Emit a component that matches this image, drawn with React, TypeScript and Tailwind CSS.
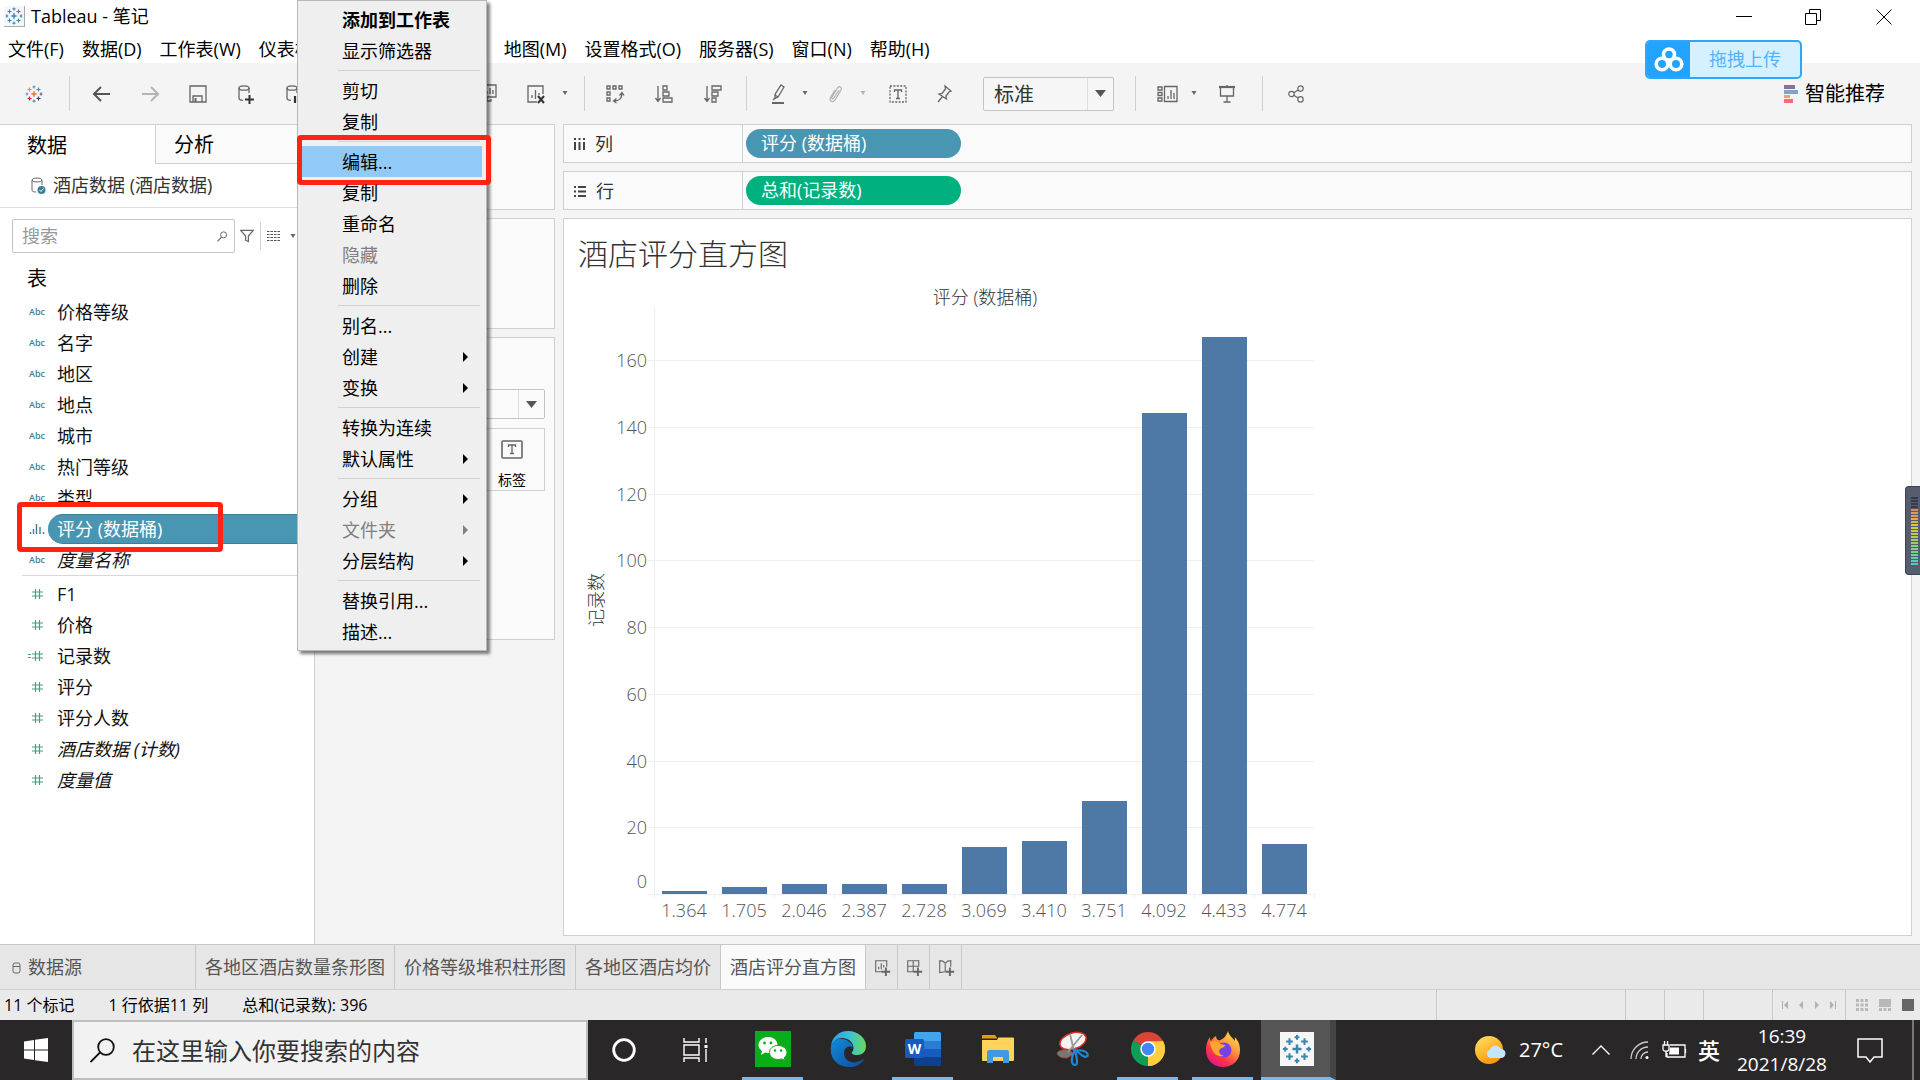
import type { ReactNode } from "react";

interface Field {
  name: string;
  icon: "abc" | "bin" | "number" | "calc";
  italic?: boolean;
  selected?: boolean;
}

interface MenuEntry {
  label: string;
  bold?: boolean;
  disabled?: boolean;
  submenu?: boolean;
  active?: boolean;
}

const MENUS = [
  "文件(F)", "数据(D)", "工作表(W)", "仪表板(B)", "故事(T)", "分析(A)",
  "地图(M)", "设置格式(O)", "服务器(S)", "窗口(N)", "帮助(H)",
];

const DIMENSIONS: Field[] = [
  { name: "价格等级", icon: "abc" },
  { name: "名字", icon: "abc" },
  { name: "地区", icon: "abc" },
  { name: "地点", icon: "abc" },
  { name: "城市", icon: "abc" },
  { name: "热门等级", icon: "abc" },
  { name: "类型", icon: "abc" },
  { name: "评分 (数据桶)", icon: "bin", selected: true },
  { name: "度量名称", icon: "abc", italic: true },
];

const MEASURES: Field[] = [
  { name: "F1", icon: "number" },
  { name: "价格", icon: "number" },
  { name: "记录数", icon: "calc" },
  { name: "评分", icon: "number" },
  { name: "评分人数", icon: "number" },
  { name: "酒店数据 (计数)", icon: "number", italic: true },
  { name: "度量值", icon: "number", italic: true },
];

const CONTEXT_MENU: MenuEntry[][] = [
  [{ label: "添加到工作表", bold: true }, { label: "显示筛选器" }],
  [{ label: "剪切" }, { label: "复制" }],
  [
    { label: "编辑...", active: true },
    { label: "复制" },
    { label: "重命名" },
    { label: "隐藏", disabled: true },
    { label: "删除" },
  ],
  [{ label: "别名..." }, { label: "创建", submenu: true }, { label: "变换", submenu: true }],
  [{ label: "转换为连续" }, { label: "默认属性", submenu: true }],
  [
    { label: "分组", submenu: true },
    { label: "文件夹", submenu: true, disabled: true },
    { label: "分层结构", submenu: true },
  ],
  [{ label: "替换引用..." }, { label: "描述..." }],
];

const BINS = [
  { bin: "1.364", count: 1 },
  { bin: "1.705", count: 2 },
  { bin: "2.046", count: 3 },
  { bin: "2.387", count: 3 },
  { bin: "2.728", count: 3 },
  { bin: "3.069", count: 14 },
  { bin: "3.410", count: 16 },
  { bin: "3.751", count: 28 },
  { bin: "4.092", count: 144 },
  { bin: "4.433", count: 167 },
  { bin: "4.774", count: 15 },
];

const SHEETS = ["各地区酒店数量条形图", "价格等级堆积柱形图", "各地区酒店均价", "酒店评分直方图"];

/* ---------- icons ---------- */

function Glyph({ size = 20, className = "text-[#666]", children }: { size?: number; className?: string; children: ReactNode }) {
  return (
    <svg width={size} height={size} viewBox="0 0 20 20" fill="none" stroke="currentColor" strokeWidth="1.3" className={`shrink-0 ${className}`} aria-hidden="true">
      {children}
    </svg>
  );
}

function Caret({ className = "text-[#666]" }: { className?: string }) {
  return (
    <svg width="8" height="5" viewBox="0 0 8 5" className={`shrink-0 ${className}`} aria-hidden="true">
      <path d="M1.500 0h5L4 4z" fill="currentColor" />
    </svg>
  );
}

function BigCaret() {
  return (
    <svg width="11" height="7" viewBox="0 0 11 7" className="text-[#555]" aria-hidden="true">
      <path d="M0 0h11L5.500 7z" fill="currentColor" />
    </svg>
  );
}

const LOGO_COLORS = ["#e8762d", "#7199a6", "#7199a6", "#5b6591", "#5b879b", "#eb912c", "#c72035", "#59879b", "#1f447e"];

function TableauMark({ size, mono }: { size: number; mono?: string }) {
  const marks: [number, number, number][] = [
    [12, 12, 3.6], [12, 2.6, 1.9], [2.6, 12, 1.9], [21.4, 12, 1.9], [12, 21.4, 1.9],
    [6, 6, 2.7], [6, 18, 2.7], [18, 6, 2.7], [18, 18, 2.7],
  ];
  return (
    <svg width={size} height={size} viewBox="0 0 24 24" fill="none" aria-hidden="true">
      {marks.map(([x, y, r], i) => (
        <path key={i} d={`M${x - r} ${y}h${r * 2}M${x} ${y - r}v${r * 2}`} stroke={mono ?? LOGO_COLORS[i]} strokeWidth={i === 0 ? 2 : 1.6} />
      ))}
    </svg>
  );
}

function Database({ paused }: { paused?: boolean }) {
  return (
    <Glyph>
      <ellipse cx="8" cy="4" rx="5" ry="2.200" />
      <path d="M3 4v10c0 1.500 2 2.300 4 2.300M13 4v5" />
      {paused ? <path d="M11 12v7M15 12v7" strokeWidth="2.200" stroke="#333" /> : <path d="M9 15.500h9M13.500 11v9" strokeWidth="2" stroke="#333" />}
    </Glyph>
  );
}

function FieldIcon({ icon }: { icon: Field["icon"] }) {
  if (icon === "abc") {
    return <span className="text-[9px] font-semibold text-[#3b7f99]">Abc</span>;
  }
  if (icon === "bin") {
    return (
      <svg width="16" height="12" viewBox="0 0 16 12" stroke="#3b7f99" strokeWidth="1.400" aria-hidden="true">
        <path d="M1.500 9v2M4.500 6v5M7.500 1v10M11 4v7M14.500 9v2" />
      </svg>
    );
  }
  return (
    <svg width="18" height="12" viewBox="0 0 18 12" stroke="#3fa37c" strokeWidth="1.200" aria-hidden="true">
      <path d="M7.500 1v10M11.500 1v10M4 4h11M4 8h11" />
      {icon === "calc" && <path d="M0 4.500h3M0 7.500h3" />}
    </svg>
  );
}

/* ---------- top of the window ---------- */

function TitleBar() {
  return (
    <header className="flex h-[31px] items-center bg-white pt-[2px] pl-1">
      <span className="flex h-[21px] w-[21px] items-center justify-center border-r border-b border-[#aaa] bg-[#f6f6f6]">
        <TableauMark size={18} mono="#3a86ad" />
      </span>
      <h1 className="ml-[6px] flex-1 text-[18px] leading-[29px] text-black">Tableau - 笔记</h1>
      <button aria-label="最小化" className="flex w-[69px] justify-center">
        <svg width="16" height="16" viewBox="0 0 16 16" stroke="#000"><path d="M0 7.500h16" /></svg>
      </button>
      <button aria-label="还原" className="flex w-[69px] justify-center">
        <svg width="16" height="16" viewBox="0 0 16 16" stroke="#000" fill="none"><path d="M.5 4.500h11v11H.5zM4.500 4.500V.5h11v11h-4" /></svg>
      </button>
      <button aria-label="关闭" className="flex w-[73px] justify-center">
        <svg width="16" height="16" viewBox="0 0 16 16" stroke="#000"><path d="M.5.5l15 15M15.500.5l-15 15" /></svg>
      </button>
    </header>
  );
}

function MenuBar() {
  return (
    <nav className="flex h-8 items-end gap-[18px] bg-white pl-2">
      {MENUS.map((menu) => (
        <button key={menu} className="text-[18px] leading-7 whitespace-nowrap text-black">{menu}</button>
      ))}
    </nav>
  );
}

function ToolButton({ label, className = "w-[46px]", children }: { label: string; className?: string; children: ReactNode }) {
  return (
    <button aria-label={label} className={`flex h-9 shrink-0 items-center justify-center ${className}`}>
      {children}
    </button>
  );
}

function Divider({ className }: { className: string }) {
  return <span className={`h-[35px] w-px shrink-0 bg-[#d0d0d0] ${className}`} />;
}

function Toolbar() {
  return (
    <div className="flex h-[61px] items-center bg-[#f4f4f4] pl-[10px]">
      <ToolButton label="开始页面" className="w-12"><TableauMark size={18} /></ToolButton>
      <Divider className="mr-2 ml-[11px]" />
      <ToolButton label="撤销" className="w-12">
        <Glyph className="text-[#555]"><path d="M2 10h16M9 3l-7 7 7 7" strokeWidth="2" /></Glyph>
      </ToolButton>
      <ToolButton label="重做" className="w-12">
        <Glyph className="text-[#b4b4b4]"><path d="M2 10h16M11 3l7 7-7 7" strokeWidth="2" /></Glyph>
      </ToolButton>
      <ToolButton label="保存" className="w-12">
        <Glyph><path d="M2 2h16v16H2zM5 18v-6h9v6" /><path d="M7.500 14v4" strokeWidth="2" /></Glyph>
      </ToolButton>
      <ToolButton label="新建数据源" className="w-12"><Database /></ToolButton>
      <ToolButton label="暂停自动更新" className="w-12"><Database paused /></ToolButton>
      <ToolButton label="运行更新" className="w-12">
        <Glyph><path d="M16 6a7 7 0 1 0 1 5M16 2v4h-4" /></Glyph>
      </ToolButton>
      <Divider className="mx-3" />
      <ToolButton label="新建工作表" className="w-[73px]">
        <Glyph><path d="M2 2h13v13H2zM5 12V8M8.500 12V5M12 12V9" /></Glyph>
      </ToolButton>
      <ToolButton label="复制工作表" className="w-12">
        <Glyph><path d="M6 1h12v12H6zM9 10V7M12 10V4M15 10V6M3 6v11h10v-2M6 14v2M9 14v2" /></Glyph>
      </ToolButton>
      <ToolButton label="清除工作表" className="w-12">
        <Glyph><path d="M11 18H2V2h15v8M6 14v-3M9.500 15V6M13 11V9" /><path d="M12 12l6 7M18 12l-6 7" strokeWidth="2" stroke="#333" /></Glyph>
      </ToolButton>
      <Caret className="ml-px text-[#666]" />
      <Divider className="mr-[6px] ml-[15px]" />
      <ToolButton label="交换行和列" className="w-12">
        <Glyph><path d="M2 2h3v3H2zM8 2h3v3H8zM14 2h3v3h-3zM2 8h3v3H2zM2 14h3v3H2zM17 9c0 5-3 8-8 8M14.500 11.500L17 8.500l2 3M11.500 14.500L8.500 17l3 2" /></Glyph>
      </ToolButton>
      <ToolButton label="升序排序" className="w-[50px]">
        <Glyph><path d="M4 2v15M1.500 14L4 17.500 6.500 14M9 2h4v4H9zM9 8h6v4H9zM9 14h9v4H9z" /></Glyph>
      </ToolButton>
      <ToolButton label="降序排序" className="w-12">
        <Glyph><path d="M4 2v15M1.500 14L4 17.500 6.500 14M9 2h9v4H9zM9 8h6v4H9zM9 14h4v4H9z" /></Glyph>
      </ToolButton>
      <Divider className="mr-2 ml-[9px]" />
      <ToolButton label="突出显示">
        <Glyph><path d="M13 1l3 2-6 10-3 1.500v-4zM7 11l3 2M5 16l2-2" /><path d="M4 19h12" strokeWidth="2" /></Glyph>
      </ToolButton>
      <Caret />
      <ToolButton label="组成员" className="ml-1 w-[46px]">
        <Glyph className="text-[#b4b4b4]"><path d="M13 6l-5 8c-1 1.500-3 .5-2-1l5.500-9c1.500-2.500 5-.5 3.500 2l-6 10c-2 3-6.500 1-4.500-2.500L9 6" /></Glyph>
      </ToolButton>
      <Caret className="text-[#b4b4b4]" />
      <ToolButton label="显示标记标签" className="ml-2 w-[46px]">
        <Glyph><path d="M2 2h16v16H2z" strokeDasharray="2 1.400" /><path d="M6.500 8V6h7v2M10 6v8.500M8 14.500h4" /></Glyph>
      </ToolButton>
      <ToolButton label="固定轴">
        <Glyph><path d="M11 2l6 5-2 1-3 4 .5 3L5 10l3-.500L11.500 5zM8.500 12.500L4 18" /></Glyph>
      </ToolButton>
      <div className="relative ml-4 shrink-0">
        <select aria-label="适合" className="block h-[34px] w-[131px] appearance-none rounded-[2px] border border-[#c4c4c4] bg-[#f6f6f6] pt-[2px] pl-[10px] text-[20px] text-[#333]">
          <option>标准</option>
        </select>
        <span className="pointer-events-none absolute inset-y-px right-px flex w-[26px] items-center justify-center border-l border-[#ddd]"><BigCaret /></span>
      </div>
      <Divider className="mr-2 ml-[21px]" />
      <ToolButton label="显示/隐藏卡">
        <svg width="21" height="18" viewBox="0 0 21 18" fill="none" stroke="#666" strokeWidth="1.300"><path d="M1 2h4v3H1zM1 7.500h4v3H1zM1 13h4v3H1zM7.500 1.500H20v15H7.500zM11 14v-3M14 14V5M17 14V8" /></svg>
      </ToolButton>
      <Caret />
      <ToolButton label="演示模式" className="ml-[6px] w-[46px]">
        <Glyph><path d="M2 3h16" strokeWidth="2.200" /><path d="M3.500 3v9h13V3M10 1v1M10 12v6M6.500 18h7" /></Glyph>
      </ToolButton>
      <Divider className="mr-[10px] ml-3" />
      <ToolButton label="共享">
        <Glyph size={18}><circle cx="5" cy="10" r="3" /><circle cx="15" cy="4" r="3" /><circle cx="15" cy="16" r="3" /><path d="M7.500 8.500l5-3M7.500 11.500l5 3" /></Glyph>
      </ToolButton>
      <button className="mr-[35px] ml-auto flex items-center gap-[6px] text-[20px] whitespace-nowrap text-black">
        <svg width="15" height="18" viewBox="0 0 15 18" aria-hidden="true">
          <path d="M0 0h11v4H0z" fill="#8a7195" /><path d="M0 5h14v4H0z" fill="#7fa3cf" /><path d="M0 10h6v3H0z" fill="#f3a069" /><path d="M0 14h9v4H0z" fill="#fb6a78" />
        </svg>
        智能推荐
      </button>
    </div>
  );
}

/* ---------- data pane ---------- */

function FieldRow({ field }: { field: Field }) {
  return (
    <li className="relative flex h-[31px] items-center">
      <span className="flex w-12 shrink-0 items-center justify-end pr-[2px]">
        <span className="flex w-[18px] justify-center">
          <FieldIcon icon={field.icon} />
        </span>
      </span>
      <span
        className={`h-[30px] flex-1 pl-[9px] text-[18px] ${field.selected ? "rounded-l-full border-y border-[#3d7f9b] bg-[#4996b2] leading-[28px] text-white" : "leading-[31px] text-[#111]"} ${field.italic ? "italic" : ""}`}
      >
        {field.name}
      </span>
      {field.selected && <span className="absolute -top-[11px] left-[17px] z-10 h-[50px] w-[206px] rounded-[4px] border-[5px] border-[#ff2313]" />}
    </li>
  );
}

function DataPane() {
  return (
    <aside className="w-[315px] shrink-0 border-r border-[#d0d0d0] bg-white">
      <div className="flex h-10 border-t border-[#d0d0d0] text-[20px] text-black">
        <button className="w-[155px] pt-[2px] pl-[27px] text-left">数据</button>
        <button className="flex-1 border-b border-l border-[#d0d0d0] bg-[#fafafa] pt-[2px] pl-[18px] text-left">分析</button>
      </div>
      <div className="flex h-11 items-center gap-[7px] border-b border-[#e0e0e0] pl-[31px] text-[18px] text-[#333]">
        <svg width="15" height="18" viewBox="0 0 15 18" fill="none" aria-hidden="true">
          <ellipse cx="6" cy="3" rx="5" ry="2" stroke="#666" /><path d="M1 3v10c0 1.500 1.500 2 4 2M11 3v5" stroke="#666" />
          <circle cx="10.500" cy="13" r="4" fill="#3b7f99" /><path d="M8.500 13l1.500 1.500 2.500-3" stroke="#fff" />
        </svg>
        酒店数据 (酒店数据)
      </div>
      <div className="mt-[11px] flex h-[34px] items-center pl-3">
        <label className="flex h-full w-[223px] items-center rounded-[2px] border border-[#c4c4c4] pr-[6px] pl-[9px]">
          <input aria-label="搜索" placeholder="搜索" className="min-w-0 flex-1 text-[18px] outline-none placeholder:text-[#999]" />
          <Glyph size={11}><circle cx="12" cy="7" r="5.500" strokeWidth="1.800" /><path d="M8 11l-7 8" strokeWidth="2" /></Glyph>
        </label>
        <button aria-label="筛选器" className="ml-[5px]">
          <Glyph size={14}><path d="M1 2h18l-7 8v8l-4-2v-6z" strokeWidth="1.800" /></Glyph>
        </button>
        <span className="mx-[6px] h-7 w-px bg-[#d0d0d0]" />
        <svg width="13" height="10" viewBox="0 0 13 10" stroke="#555" aria-hidden="true">
          <path d="M0 .5h13M0 3.500h13M0 6.500h13M0 9.500h13" strokeDasharray="2.500 1" />
        </svg>
        <span className="ml-[9px] flex"><Caret /></span>
      </div>
      <h2 className="mt-[6px] h-[37px] pl-[27px] text-[20px] leading-[39px] text-black">表</h2>
      <ul>
        {DIMENSIONS.map((field) => <FieldRow key={field.name} field={field} />)}
      </ul>
      <hr className="mb-[2px] ml-[22px] border-[#d8d8d8]" />
      <ul>
        {MEASURES.map((field) => <FieldRow key={field.name} field={field} />)}
      </ul>
    </aside>
  );
}

function Cards() {
  return (
    <section className="flex w-[248px] shrink-0 flex-col gap-2 px-2 text-[14px]">
      <div className="h-[86px] border border-[#d0d0d0] bg-[#fafafa]" />
      <div className="h-[111px] border border-[#d0d0d0] bg-[#fafafa]" />
      <div className="h-[303px] border border-[#d0d0d0] bg-[#fafafa] px-[9px] pt-[51px]">
        <div className="relative">
          <select aria-label="标记类型" className="block h-[30px] w-full appearance-none rounded-[2px] border border-[#c4c4c4] bg-[#fafafa]" />
          <span className="pointer-events-none absolute inset-y-px right-px flex w-[26px] items-center justify-center border-l border-[#ddd]"><BigCaret /></span>
        </div>
        <div className="mt-[9px] flex justify-end">
          <button className="flex h-[63px] w-[66px] flex-col items-center justify-end border border-[#d0d0d0] bg-[#fafafa] text-black">
            <svg width="22" height="19" viewBox="0 0 22 19" fill="none" stroke="#666" aria-hidden="true">
              <rect x="1" y="1" width="20" height="17" rx="1" strokeWidth="1.600" /><path d="M7.500 7V5h7v2M11 5v8.500M9 13.500h4" strokeWidth="1.300" />
            </svg>
            <span className="mt-[10px] leading-[21px]">标签</span>
          </button>
        </div>
      </div>
    </section>
  );
}

/* ---------- worksheet ---------- */

function Shelf({ label, icon, children }: { label: string; icon: ReactNode; children: ReactNode }) {
  return (
    <div className="flex h-[39px] items-center border border-[#d0d0d0] bg-[#fafafa]">
      <div className="flex h-full w-[179px] items-center gap-[10px] border-r border-[#d0d0d0] pt-px pl-[10px] text-[18px] text-[#333]">
        {icon}
        {label}
      </div>
      {children}
    </div>
  );
}

function Histogram() {
  const baseline = 616;
  const unit = 3.3375;
  const left = 90;
  return (
    <svg width="760" height="650" className="block" role="img" aria-label="酒店评分直方图">
      <text x="421" y="26" textAnchor="middle" fontSize="18" fontWeight="300" fill="#333">评分 (数据桶)</text>
      <text transform="translate(39 322) rotate(-90)" textAnchor="middle" fontSize="18" fontWeight="300" fill="#333">记录数</text>
      {[0, 20, 40, 60, 80, 100, 120, 140, 160].map((tick) => {
        const y = Math.round(baseline - tick * unit);
        return (
          <g key={tick}>
            <path d={`M${left - 6} ${y + 0.5}H750`} stroke="#eee" />
            <text x="83" y={tick === 0 ? 610 : y + 7} textAnchor="end" fontSize="18" fontWeight="300" fill="#555">{tick}</text>
          </g>
        );
      })}
      <path d={`M${left + 0.5} 30V${baseline}`} stroke="#eee" />
      {BINS.map(({ bin, count }, i) => (
        <g key={bin}>
          <path d={`M${left + i * 60 + 0.5} ${baseline}v4`} stroke="#eee" />
          <rect x={left + 8 + i * 60} y={Math.round(baseline - count * unit)} width="45" height={Math.round(count * unit)} fill="#4e79a7" />
          <text x={left + 30 + i * 60} y="639" textAnchor="middle" fontSize="18" fontWeight="300" fill="#555">{bin}</text>
        </g>
      ))}
      <path d={`M750.5 ${baseline}v4`} stroke="#eee" />
    </svg>
  );
}

function Worksheet() {
  return (
    <main className="flex min-w-0 flex-1 flex-col gap-2 pr-2 pb-2">
      <Shelf
        label="列"
        icon={<svg width="11" height="12" viewBox="0 0 11 12" stroke="#444" strokeWidth="2" aria-hidden="true"><path d="M1 0v2M1 4v8M5.500 0v2M5.500 4v8M10 0v2M10 4v8" /></svg>}
      >
        <button className="ml-[3px] h-[29px] w-[215px] rounded-full bg-[#4996b2] pl-[15px] text-left text-[18px] leading-[29px] text-white">评分 (数据桶)</button>
      </Shelf>
      <Shelf
        label="行"
        icon={<svg width="12" height="11" viewBox="0 0 12 11" stroke="#444" strokeWidth="2" aria-hidden="true"><path d="M0 1h2M4 1h8M0 5.500h2M4 5.500h8M0 10h2M4 10h8" /></svg>}
      >
        <button className="ml-[3px] h-[29px] w-[215px] rounded-full bg-[#00b180] pl-[15px] text-left text-[18px] leading-[29px] text-white">总和(记录数)</button>
      </Shelf>
      <div className="flex-1 border border-[#d0d0d0] bg-white pt-[11px]">
        <h2 className="pl-[14px] text-[30px] leading-[48px] font-light text-[#333]">酒店评分直方图</h2>
        <Histogram />
      </div>
    </main>
  );
}

/* ---------- bottom of the window ---------- */

function SheetTabs() {
  return (
    <nav className="flex h-[45px] border-t border-[#c8c8c8] bg-[#e6e6e6] text-[18px] text-[#555]">
      <button className="flex w-[196px] items-center gap-[7px] border-r border-[#c8c8c8] pt-px pl-3">
        <svg width="9" height="12" viewBox="0 0 9 12" fill="none" stroke="#666" aria-hidden="true"><rect x="1" y="1" width="7" height="10" rx="2" /><path d="M1 4.500h7" /></svg>
        数据源
      </button>
      {SHEETS.map((sheet, i) => (
        <button key={sheet} className={`border-r border-[#c8c8c8] px-[9px] pt-px whitespace-nowrap ${i === SHEETS.length - 1 ? "bg-[#fafafa]" : ""}`}>
          {sheet}
        </button>
      ))}
      <button aria-label="新建工作表" className="flex w-8 items-center justify-center border-r border-[#c8c8c8] pl-[2px]">
        <Glyph size={17}><path d="M10 15H2V2h13v7M5.500 12V9M8.500 12V5M11.500 10V7" /><path d="M9 15h10M14 10v10" strokeWidth="2.200" /></Glyph>
      </button>
      <button aria-label="新建仪表板" className="flex w-8 items-center justify-center border-r border-[#c8c8c8] pl-[2px]">
        <Glyph size={17}><path d="M10 15H2V2h13v7M8.500 2v13M2 8.500h13" /><path d="M9 15h10M14 10v10" strokeWidth="2.200" /></Glyph>
      </button>
      <button aria-label="新建故事" className="flex w-8 items-center justify-center border-r border-[#c8c8c8] pl-[2px]">
        <Glyph size={17}><path d="M8.500 15L2 16V2l3.500.500 3 2.500 3-2.500L15 2v7M8.500 5v10" /><path d="M9 15h10M14 10v10" strokeWidth="2.200" /></Glyph>
      </button>
    </nav>
  );
}

function StatusBar() {
  return (
    <div className="flex h-[31px] items-center border-t border-[#d0d0d0] bg-[#eaeaea] pl-1 text-[16px] whitespace-nowrap text-black">
      <span>11 个标记</span>
      <span className="ml-[34px]">1 行依据11 列</span>
      <span className="ml-[34px]">总和(记录数): 396</span>
      <span className="ml-auto h-full w-[189px] border-l border-[#c8c8c8]" />
      <span className="h-full w-[39px] border-l border-[#c8c8c8]" />
      <span className="h-full w-[39px] border-l border-[#c8c8c8]" />
      <span className="h-full w-[69px] border-l border-[#c8c8c8]" />
      <span className="flex h-full w-[73px] items-center justify-between border-l border-[#c8c8c8] px-[9px]">
        {["M6 0v8L2 4zM0 0h1v8H0z", "M5 0v8L1 4z", "M1 0v8l4-4z", "M0 0v8l4-4zM5 0h1v8H5z"].map((d) => (
          <svg key={d} width="6" height="8" viewBox="0 0 6 8" fill="#b0b0b0" aria-hidden="true"><path d={d} /></svg>
        ))}
      </span>
      <span className="flex h-full w-[75px] items-center gap-[11px] border-l border-[#c8c8c8] pl-[10px]">
        <svg width="12" height="12" viewBox="0 0 12 12" stroke="#b8b8b8" strokeWidth="3" aria-hidden="true"><path d="M0 1.500h12M0 6h12M0 10.500h12" strokeDasharray="3 1.500" /></svg>
        <svg width="12" height="12" viewBox="0 0 12 12" stroke="#b8b8b8" aria-hidden="true"><path d="M0 4h12" strokeWidth="8" /><path d="M0 10.500h12" strokeWidth="3" strokeDasharray="3 1.500" /></svg>
        <span className="h-3 w-3 bg-[#666]" />
      </span>
    </div>
  );
}

function TaskbarApp({ label, running, children }: { label: string; running?: boolean; children: ReactNode }) {
  return (
    <button aria-label={label} className="flex h-full w-[75px] shrink-0 flex-col items-center">
      <span className="flex flex-1 items-center">{children}</span>
      <span className={`h-[3px] w-[61px] ${running ? "bg-[#76b9ed]" : ""}`} />
    </button>
  );
}

function Taskbar() {
  return (
    <footer className="flex h-[60px] items-stretch bg-[#2a2728] text-white">
      <button aria-label="开始" className="flex w-[72px] items-center justify-center">
        <svg width="24" height="24" viewBox="0 0 24 24" fill="#fff"><path d="M0 3.400l10-1.400v9.500H0zM11 1.800L24 0v11.500H11zM0 12.500h10V22L0 20.600zM11 12.500h13V24l-13-1.800z" /></svg>
      </button>
      <label className="flex w-[516px] items-center border-2 border-[#bfbfbf] bg-[#f2f2f2] pl-4">
        <svg width="25" height="25" viewBox="0 0 25 25" fill="none" stroke="#111" strokeWidth="1.800" aria-hidden="true"><circle cx="16" cy="9" r="7.800" /><path d="M10 14.500L.5 24" /></svg>
        <input aria-label="搜索" placeholder="在这里输入你要搜索的内容" className="ml-[17px] min-w-0 flex-1 pt-px text-[24px] outline-none placeholder:text-[#333]" />
      </label>
      <button aria-label="Cortana" className="flex w-[72px] items-center justify-center">
        <svg width="24" height="24" viewBox="0 0 24 24" fill="none" stroke="#fff" strokeWidth="2.800"><circle cx="12" cy="12" r="10.300" /></svg>
      </button>
      <button aria-label="任务视图" className="mr-[5px] flex w-[70px] items-center justify-center">
        <svg width="25" height="24" viewBox="0 0 25 24" fill="none" stroke="#fff" strokeWidth="1.400"><path d="M1 0v4h15V0M1 7h15v10H1zM1 24v-4h15v4M23 0v5M23 11v13" /><path d="M23 7v3" strokeWidth="3" /></svg>
      </button>
      <TaskbarApp label="微信" running>
        <svg width="36" height="36" viewBox="0 0 36 36">
          <path d="M0 0h36v36H0z" fill="#09ac19" />
          <path d="M13 6c5.500 0 9.500 3.500 9.500 8s-4 8-9.500 8c-1 0-2-.1-3-.4L6 24l1-4c-2-1.500-3.500-3.500-3.500-6C3.500 9.500 7.500 6 13 6z" fill="#fff" />
          <path d="M23 14.500c5 0 9 3 9 7 0 2-1 3.800-2.700 5l.700 3-3.300-1.600c-1.200.4-2.400.6-3.700.6-5 0-8.500-3-8.500-7s3.500-7 8.500-7z" fill="#fff" stroke="#09ac19" />
          <circle cx="9.500" cy="12" r="1.400" fill="#09ac19" /><circle cx="16" cy="12" r="1.400" fill="#09ac19" />
          <circle cx="20" cy="19.500" r="1.200" fill="#09ac19" /><circle cx="26" cy="19.500" r="1.200" fill="#09ac19" />
        </svg>
      </TaskbarApp>
      <TaskbarApp label="Edge">
        <svg width="36" height="36" viewBox="0 0 36 36">
          <defs>
            <linearGradient id="edgeTop" x1="0" x2="1"><stop offset="0" stopColor="#2a9fe0" /><stop offset=".5" stopColor="#36c0dd" /><stop offset="1" stopColor="#6bdb58" /></linearGradient>
            <linearGradient id="edgeLow" x1="0" y1="0" x2="1" y2="1"><stop offset="0" stopColor="#1488d8" /><stop offset="1" stopColor="#0b4fa0" /></linearGradient>
          </defs>
          <path d="M1 15C2 6 9 0 18 0c10 0 18 7 18 15 0 6-4 9-9 9-4 0-6-1.500-5-3 1-1 1.500-2 1.500-4C23.500 11 18 7 12 7 7 7 3 10 1 15z" fill="url(#edgeTop)" />
          <path d="M1 15C3 9 8 7 13 8c5 1 9 4 10 8-6-2-9 2-9 6 0 7 7 11 13 9 3-1 5-2 6-3 .8-.2 1 .5.5 1.200C30 34 25 36 19 36 8 36-1 28 1 15z" fill="url(#edgeLow)" />
        </svg>
      </TaskbarApp>
      <TaskbarApp label="Word" running>
        <svg width="36" height="34" viewBox="0 0 36 34">
          <path d="M9 1.500Q9 0 10.500 0H34.500Q36 0 36 1.500V9H9z" fill="#41a5ee" /><path d="M9 9h27v8H9z" fill="#2b7cd3" /><path d="M9 17h27v8H9z" fill="#185abd" /><path d="M9 25h27v7q0 2-1.500 2h-24Q9 34 9 32z" fill="#103f91" />
          <rect x="0" y="7" width="19" height="19" rx="1.500" fill="#185abd" />
          <text x="9.500" y="22" textAnchor="middle" fontSize="14" fontWeight="700" fill="#fff">W</text>
        </svg>
      </TaskbarApp>
      <TaskbarApp label="文件资源管理器">
        <svg width="32" height="28" viewBox="0 0 32 28">
          <path d="M0 1q0-1 1-1h12l2.500 3.500H0z" fill="#e3a000" /><path d="M0 5h15l1.500-2.500H31q1 0 1 1V25q0 1-1 1H1q-1 0-1-1z" fill="#ffd35b" />
          <path d="M5 17q0-2 2-2h18q2 0 2 2v11h-6v-6H11v6H5z" fill="#3e9bdf" />
        </svg>
      </TaskbarApp>
      <TaskbarApp label="截图工具">
        <svg width="36" height="36" viewBox="0 0 36 36" fill="none">
          <path d="M2 22c2-3 7-4 12-3l5 4-7 4c-5 0-9-1-10-5z" fill="#777" stroke="#c33" />
          <ellipse cx="18" cy="10" rx="13.500" ry="8" transform="rotate(-18 18 10)" fill="#f4f4f4" stroke="#d9302b" strokeWidth="1.600" />
          <path d="M15 3l4 17M27 4L13 21" stroke="#999" strokeWidth="1.800" />
          <path d="M20 19c4 0 10 0 12 3s-1 5-4 3-5-4-8-6zM20 19c-2 4-4 8-3 12s5 4 5 0-1-8-2-12z" stroke="#1e88d2" strokeWidth="2.200" />
        </svg>
      </TaskbarApp>
      <TaskbarApp label="Chrome" running>
        <svg width="34" height="34" viewBox="0 0 34 34">
          <path d="M17 17L2.300 8.500A17 17 0 0 1 31.700 8.500z" fill="#db4437" />
          <path d="M17 17l14.700-8.500A17 17 0 0 1 17 34z" fill="#ffcd40" />
          <path d="M17 17v17A17 17 0 0 1 2.300 8.500z" fill="#0f9d58" />
          <path d="M17 9.300h15A17 17 0 0 1 17 34l6.500-12.500z" fill="#ffcd40" />
          <circle cx="17" cy="17" r="7.700" fill="#fff" /><circle cx="17" cy="17" r="6.200" fill="#4285f4" />
        </svg>
      </TaskbarApp>
      <TaskbarApp label="Firefox" running>
        <svg width="34" height="36" viewBox="0 0 34 36">
          <defs><linearGradient id="fox" x1="1" y1="0" x2=".3" y2="1"><stop offset="0" stopColor="#fff44f" /><stop offset=".45" stopColor="#ff9640" /><stop offset=".75" stopColor="#ff3647" /><stop offset="1" stopColor="#e31587" /></linearGradient></defs>
          <path d="M22 0c1 5 5 7 7 10 0-1.500 0-2.500-.5-4C33 10 34 15 34 19c0 10-7 17-17 17S0 29 0 19c0-5 1-9 4-13 0 2 .5 3 1 4 1-2 3-4 5-5 0 2 1 4 3 4.500 4-1 7-4 9-9.500z" fill="url(#fox)" />
          <circle cx="18" cy="19" r="7.500" fill="#7542e5" />
          <path d="M4 11c4-2 8-1 10 2l5 1c0 2-3 3-5 4-2 3 0 6 4 7-8 2-13-5-14-14z" fill="#ffa52e" />
        </svg>
      </TaskbarApp>
      <button aria-label="Tableau" className="ml-px flex h-full w-[75px] shrink-0 items-center justify-center border-r-[6px] border-b-[3px] border-r-[#454545] border-b-[#76b9ed] bg-[#555] pl-[2px]">
        <span className="flex h-[34px] w-[34px] items-center justify-center bg-[#f6f6f6]"><TableauMark size={30} mono="#3a86ad" /></span>
      </button>
      <div className="ml-auto flex items-center">
        <svg width="31" height="30" viewBox="0 0 31 30" aria-hidden="true">
          <defs><linearGradient id="sun" x1="0" y1="0" x2=".6" y2="1"><stop offset="0" stopColor="#ffe36a" /><stop offset="1" stopColor="#ff9505" /></linearGradient></defs>
          <circle cx="14" cy="15" r="14" fill="url(#sun)" />
          <path d="M15 23a4.500 4.500 0 0 1 0-8.500 6 6 0 0 1 11-.5 4.500 4.500 0 0 1 0 9z" fill="#c3e6ff" />
        </svg>
        <span className="ml-[13px] w-[49px] text-[20px] whitespace-nowrap">27°C</span>
        <button aria-label="显示隐藏的图标" className="ml-6">
          <svg width="18" height="10" viewBox="0 0 18 10" fill="none" stroke="#fff" strokeWidth="1.400"><path d="M.5 9.500L9 1l8.500 8.500" /></svg>
        </button>
        <svg width="19" height="18" viewBox="0 0 19 18" className="ml-5" fill="none" stroke="#ccc" strokeWidth="1.300" aria-hidden="true">
          <path d="M1 18A17 17 0 0 1 18 1M6 18A12 12 0 0 1 18 6M11 18a7 7 0 0 1 7-7" /><circle cx="17" cy="16.500" r="1.500" fill="#fff" stroke="none" />
        </svg>
        <svg width="25" height="18" viewBox="0 0 25 18" className="ml-[13px]" fill="none" stroke="#fff" strokeWidth="1.300" aria-hidden="true">
          <path d="M8 4h15v12H5v-4M23.500 8v4M1 4h6v4c0 3-6 3-6 0zM2.500 4V0M5.500 4V0M4 10v6" /><path d="M8 6.500h9v7H7z" fill="#fff" stroke="none" />
        </svg>
        <span className="ml-[11px] text-[22px] font-medium">英</span>
        <div className="ml-[14px] w-[96px] text-center text-[19px] leading-[28px]">
          <div>16:39</div>
          <div>2021/8/28</div>
        </div>
        <button aria-label="通知" className="ml-[27px]">
          <svg width="26" height="25" viewBox="0 0 26 25" fill="none" stroke="#fff" strokeWidth="1.500"><path d="M1 1h24v18h-8l-4 5-4-5H1z" /></svg>
        </button>
        <span className="ml-[29px] h-[60px] w-[8px] border-l-2 border-[#777]" />
      </div>
    </footer>
  );
}

/* ---------- floating parts ---------- */

function ContextMenu() {
  return (
    <div role="menu" className="absolute top-0 left-[297px] z-20 w-[190px] border border-[#b8b8b8] bg-[#efefef] pt-[3px] pb-[3px] shadow-[3px_3px_3px_rgba(0,0,0,0.5)]">
      {CONTEXT_MENU.map((group, g) => (
        <div key={g}>
          {g > 0 && <div className="mr-[6px] ml-10 flex h-[9px] items-center"><hr className="w-full border-[#d2d2d2]" /></div>}
          {group.map((entry, i) => (
            <div key={i} className="relative px-1">
              <button
                role="menuitem"
                disabled={entry.disabled}
                className={`flex h-[31px] w-full items-center justify-between pt-[2px] pr-[14px] pl-10 text-[18px] leading-[29px] whitespace-nowrap ${entry.active ? "bg-[#91c9f7]" : ""} ${entry.bold ? "font-bold" : ""} ${entry.disabled ? "text-[#808080]" : "text-black"}`}
              >
                {entry.label}
                {entry.submenu && (
                  <svg width="5" height="10" viewBox="0 0 5 10" fill="currentColor" className="mb-[2px]" aria-hidden="true"><path d="M0 0l5 5-5 5z" /></svg>
                )}
              </button>
              {entry.active && <span className="pointer-events-none absolute -top-[11px] -left-px h-[50px] w-[194px] rounded-[4px] border-[5px] border-[#ff2313]" />}
            </div>
          ))}
        </div>
      ))}
    </div>
  );
}

function UploadBadge() {
  return (
    <button className="absolute top-10 right-[118px] z-10 flex h-[39px] w-[157px] items-stretch overflow-hidden rounded-[5px] border-2 border-[#2ea6fb] bg-[#d5f0ff] text-[18px] text-[#52b4ff]">
      <span className="flex w-[43px] items-center justify-center bg-[#22a3ff]">
        <svg width="30" height="25" viewBox="0 0 30 25" fill="none" stroke="#fff" strokeWidth="3.600" aria-hidden="true">
          <circle cx="15" cy="7.500" r="5.500" /><circle cx="8" cy="17" r="5.800" /><circle cx="22" cy="17" r="5.800" />
        </svg>
      </span>
      <span className="flex flex-1 items-center justify-center">拖拽上传</span>
    </button>
  );
}

function LevelMeter() {
  const levels = [
    "#353b4a", "#353b4a", "#353b4a", "#353b4a", "#d98a62", "#dba04e", "#dba04e", "#dcb53d", "#dcb53d", "#d8c63c", "#d8c63c", "#c6cc45",
    "#b4cc55", "#b4cc55", "#a2cc66", "#a2cc66", "#8dcc7a", "#8dcc7a", "#7acb8c", "#6fcb9b", "#5fcbac", "#55cbb6", "#4ccac0",
  ];
  return (
    <div className="absolute top-[486px] right-0 z-10 flex h-[89px] w-[15px] flex-col gap-px rounded-l-[4px] border border-r-0 border-[#3b4252] bg-[#555d6e] pt-[10px] pl-[5px]">
      {levels.map((color, i) => (
        <span key={i} className="h-[2px] w-[7px]" style={{ backgroundColor: color }} />
      ))}
    </div>
  );
}

export default function App() {
  return (
    <div className="relative flex min-h-screen flex-col overflow-hidden bg-[#f4f4f4] font-['Open_Sans','Noto_Sans_CJK_SC',sans-serif]">
      <TitleBar />
      <MenuBar />
      <Toolbar />
      <div className="flex flex-1">
        <DataPane />
        <Cards />
        <Worksheet />
      </div>
      <SheetTabs />
      <StatusBar />
      <Taskbar />
      <ContextMenu />
      <UploadBadge />
      <LevelMeter />
    </div>
  );
}
